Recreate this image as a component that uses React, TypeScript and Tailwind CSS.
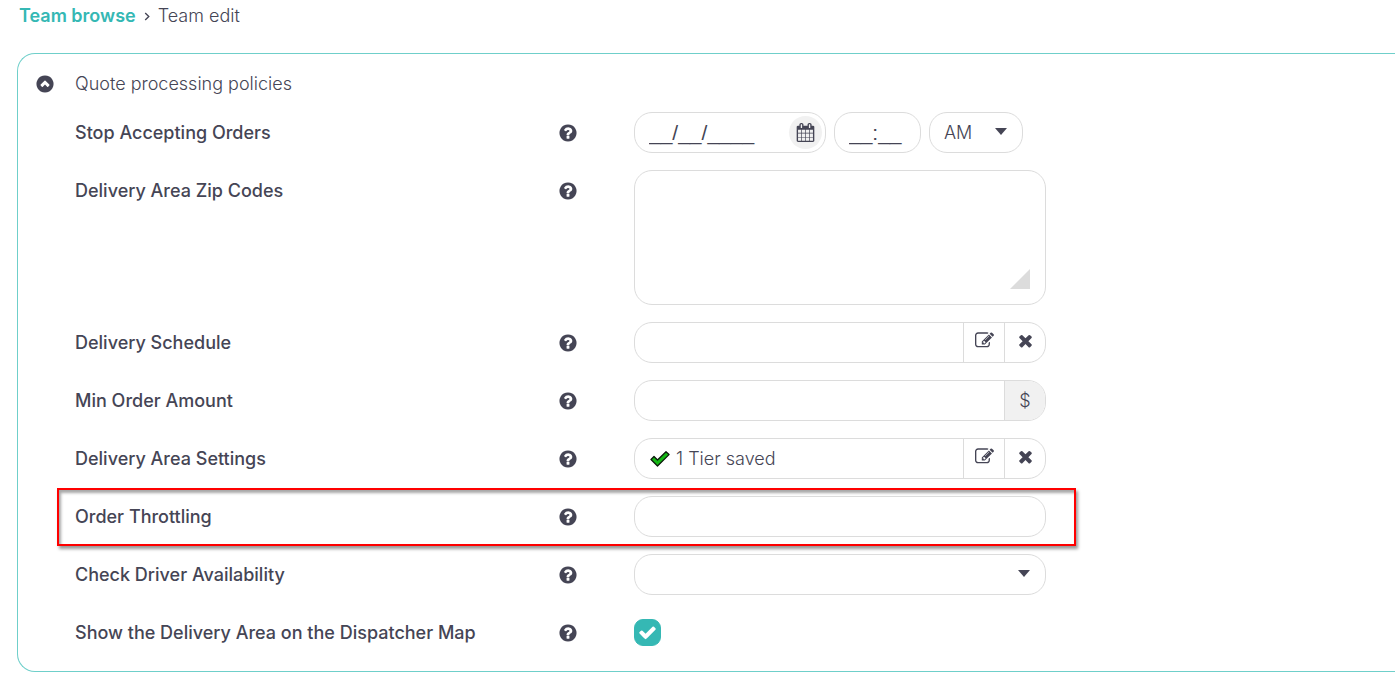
import { useState, type ReactNode } from "react";

const DISC =
  "M1664 896q0 209-103 385.500t-279.500 279.500-385.500 103-385.500-103-279.500-279.500-103-385.500 103-385.500 279.500-279.500 385.500-103 385.500 103 279.500 279.500 103 385.500z";

const PATHS = {
  question:
    "M1024 1376v-192q0-14-9-23t-23-9h-192q-14 0-23 9t-9 23v192q0 14 9 23t23 9h192q14 0 23-9t9-23zm256-672q0-88-55.500-163t-138.500-116-170-41q-243 0-371 213-15 24 8 42l132 100q7 6 19 6 16 0 25-12 53-68 86-92 34-24 86-24 48 0 85.500 26t37.500 59q0 38-20 61t-68 45q-63 28-115.500 86.500t-52.500 125.500v36q0 14 9 23t23 9h192q14 0 23-9t9-23q0-19 21.500-49.500t54.500-49.500q32-18 49-28.500t46-35 44.500-48 28-60.500 12.500-81z " +
    DISC,
  up:
    "M1179 1139l102-102q19-19 19-45t-19-45l-340-340q-19-19-45-19t-45 19l-340 340q-19 19-19 45t19 45l102 102q19 19 45 19t45-19l193-193 193 193q19 19 45 19t45-19z " +
    DISC,
  calendar:
    "M192 1664h288v-288h-288v288zm352 0h320v-288h-320v288zm-352-352h288v-320h-288v320zm352 0h320v-320h-320v320zm-352-384h288v-288h-288v288zm736 736h320v-288h-320v288zm-384-736h320v-288h-320v288zm768 736h288v-288h-288v288zm-384-352h320v-320h-320v320zm-352-864v-288q0-13-9.500-22.500t-22.500-9.500h-64q-13 0-22.500 9.500t-9.500 22.500v288q0 13 9.500 22.500t22.500 9.500h64q13 0 22.500-9.500t9.500-22.500zm736 864h288v-320h-288v320zm-384-384h320v-288h-320v288zm384 0h288v-288h-288v288zm32-480v-288q0-13-9.500-22.500t-22.500-9.500h-64q-13 0-22.500 9.500t-9.500 22.500v288q0 13 9.500 22.500t22.500 9.500h64q13 0 22.500-9.500t9.500-22.500zm384-64v1280q0 52-38 90t-90 38h-1408q-52 0-90-38t-38-90v-1280q0-52 38-90t90-38h128v-96q0-66 47-113t113-47h64q66 0 113 47t47 113v96h384v-96q0-66 47-113t113-47h64q66 0 113 47t47 113v96h128q52 0 90 38t38 90z",
  edit:
    "M888 1184l116-116-152-152-116 116v56h96v96h56zm440-720q-16-16-33 1l-350 350q-17 17-1 33t33-1l350-350q17-17 1-33zm80 594v190q0 119-84.500 203.500t-203.500 84.500h-832q-119 0-203.500-84.500t-84.500-203.500v-832q0-119 84.500-203.500t203.500-84.500h832q63 0 117 25 15 7 18 23 3 17-9 29l-49 49q-14 14-32 8-23-6-45-6h-832q-66 0-113 47t-47 113v832q0 66 47 113t113 47h832q66 0 113-47t47-113v-126q0-13 9-22l64-64q15-15 35-7t20 29zm-96-738l288 288-672 672h-288v-288zm444 132l-92 92-288-288 92-92q28-28 68-28t68 28l152 152q28 28 28 68t-28 68z",
  times:
    "M1490 1322q0 40-28 68l-136 136q-28 28-68 28t-68-28l-294-294-294 294q-28 28-68 28t-68-28l-136-136q-28-28-28-68t28-68l294-294-294-294q-28-28-28-68t28-68l136-136q28-28 68-28t68 28l294 294 294-294q28-28 68-28t68 28l136 136q28 28 28 68t-28 68l-294 294 294 294q28 28 28 68z",
  check:
    "M1671 566q0 40-28 68l-724 724-136 136q-28 28-68 28t-68-28l-136-136-362-362q-28-28-28-68t28-68l136-136q28-28 68-28t68 28l294 295 656-657q28-28 68-28t68 28l136 136q28 28 28 68z",
};

function Icon({ name, className }: { name: keyof typeof PATHS; className: string }) {
  return (
    <svg
      viewBox="0 0 1792 1792"
      fill="currentColor"
      fillRule="evenodd"
      className={className}
      aria-hidden="true"
    >
      <path d={PATHS[name]} />
    </svg>
  );
}

function Caret() {
  return (
    <svg
      viewBox="0 0 12 7"
      fill="currentColor"
      className="pointer-events-none absolute top-4 right-4 h-[7px] w-3"
      aria-hidden="true"
    >
      <path d="M0 0h12L6 7z" />
    </svg>
  );
}

const box = "h-[41px] rounded-[18px] border border-[#dcdcdc] bg-white font-light outline-none";
const mask = "font-['Liberation_Sans',sans-serif] text-[21px]";

function Row({ id, label, children }: { id: string; label: string; children: ReactNode }) {
  return (
    <div className="flex items-start">
      <div className="flex h-[41px] w-[483px] shrink-0 items-center">
        <label htmlFor={id} className="font-[450]">
          {label}
        </label>
      </div>
      <button
        type="button"
        aria-label={`Help: ${label}`}
        className="flex h-[41px] w-[76px] shrink-0 items-center"
      >
        <Icon name="question" className="size-5" />
      </button>
      {children}
    </div>
  );
}

function Actions({ label }: { label: string }) {
  return (
    <>
      <button
        type="button"
        aria-label={`Edit ${label}`}
        className="flex w-[41px] items-center justify-center border-l border-[#dcdcdc] pb-1"
      >
        <Icon name="edit" className="size-[19px]" />
      </button>
      <button
        type="button"
        aria-label={`Clear ${label}`}
        className="flex w-[41px] items-center justify-center border-l border-[#dcdcdc] pb-1"
      >
        <Icon name="times" className="size-[19px]" />
      </button>
    </>
  );
}

function SavedMark() {
  return (
    <svg viewBox="0 0 20 16" className="h-4 w-5 shrink-0" aria-hidden="true">
      <path
        d="M1 8.500 4 5.500 7.500 9 16 .8 19 3.600 7.500 15z"
        fill="#14b814"
        stroke="#0b1a0b"
        strokeWidth="1.300"
        strokeLinejoin="round"
      />
    </svg>
  );
}

export default function App() {
  const [shown, setShown] = useState(true);

  return (
    <main className="min-h-screen bg-white pb-3 font-['Inter','Noto_Sans',sans-serif] text-[18px] leading-6 text-[#454555]">
      <nav aria-label="Breadcrumb" className="flex h-[53px] items-start pt-1 pl-[19px]">
        <a href="#teams" className="font-semibold text-[#35b8b4]">
          Team browse
        </a>
        <svg
          viewBox="0 0 6 10"
          className="mx-2 mt-2 h-[9px] w-[6px]"
          fill="none"
          stroke="currentColor"
          strokeWidth="1.500"
          aria-hidden="true"
        >
          <path d="M1 1l4 4-4 4" />
        </svg>
        <span className="font-light">Team edit</span>
      </nav>

      <section className="ml-[17px] rounded-l-[18px] border border-r-0 border-[#6fcfca] py-[18px] pl-[17px]">
        <h2 className="mb-4">
          <button type="button" aria-expanded="true" className="flex items-center font-light">
            <Icon name="up" className="mr-5 size-5" />
            Quote processing policies
          </button>
        </h2>

        <form className="flex flex-col gap-[17px] pl-10">
          <Row id="stop-date" label="Stop Accepting Orders">
            <div className="flex gap-2">
              <div className={`${box} flex w-[192px] items-center pr-[3px] pl-[14px]`}>
                <input
                  id="stop-date"
                  type="text"
                  defaultValue="__/__/____"
                  className={`${mask} w-full min-w-0 bg-transparent outline-none`}
                />
                <button
                  type="button"
                  aria-label="Open calendar"
                  className="flex size-[33px] shrink-0 items-center justify-center rounded-full bg-[#f1f1f1]"
                >
                  <Icon name="calendar" className="size-[19px]" />
                </button>
              </div>
              <input
                type="text"
                aria-label="Stop time"
                defaultValue="__:__"
                className={`${box} ${mask} w-[87px] px-[14px]`}
              />
              <div className="relative">
                <select
                  aria-label="AM or PM"
                  className={`${box} w-[94px] appearance-none px-[14px]`}
                >
                  <option>AM</option>
                  <option>PM</option>
                </select>
                <Caret />
              </div>
            </div>
          </Row>

          <Row id="zips" label="Delivery Area Zip Codes">
            <div className="relative w-[412px]">
              <textarea
                id="zips"
                className="block h-[135px] w-full resize-none rounded-[18px] border border-[#dcdcdc] bg-white px-4 py-2 font-light outline-none"
              />
              <svg
                viewBox="0 0 20 20"
                className="pointer-events-none absolute right-4 bottom-4 size-5"
                fill="#dcdcdc"
                aria-hidden="true"
              >
                <path d="M20 0v20H0z" />
              </svg>
            </div>
          </Row>

          <Row id="schedule" label="Delivery Schedule">
            <div className={`${box} flex w-[412px] overflow-hidden`}>
              <input id="schedule" type="text" className="min-w-0 flex-1 px-4 outline-none" />
              <Actions label="delivery schedule" />
            </div>
          </Row>

          <Row id="min-order" label="Min Order Amount">
            <div className={`${box} flex w-[412px] overflow-hidden`}>
              <input id="min-order" type="text" className="min-w-0 flex-1 px-4 outline-none" />
              <span className="flex w-[41px] items-center justify-center border-l border-[#dcdcdc] bg-[#f1f1f1]">
                $
              </span>
            </div>
          </Row>

          <Row id="area" label="Delivery Area Settings">
            <div className={`${box} flex w-[412px] overflow-hidden`}>
              <div className="flex min-w-0 flex-1 items-center gap-[6px] pl-[15px]">
                <SavedMark />
                <input
                  id="area"
                  type="text"
                  readOnly
                  defaultValue="1 Tier saved"
                  className="min-w-0 flex-1 outline-none"
                />
              </div>
              <Actions label="delivery area settings" />
            </div>
          </Row>

          <div className="relative">
            <Row id="throttling" label="Order Throttling">
              <input id="throttling" type="text" className={`${box} w-[412px] px-4`} />
            </Row>
            <div className="pointer-events-none absolute -top-2 -left-[18px] h-[58px] w-[1019px] border-2 border-[#ff0000] shadow-[2px_3px_3px_rgba(0,0,0,0.4),inset_2px_3px_3px_rgba(0,0,0,0.35)]" />
          </div>

          <Row id="driver" label="Check Driver Availability">
            <div className="relative w-[412px]">
              <select id="driver" className={`${box} w-full appearance-none px-4`}>
                <option></option>
                <option>Yes</option>
                <option>No</option>
              </select>
              <Caret />
            </div>
          </Row>

          <Row id="show-area" label="Show the Delivery Area on the Dispatcher Map">
            <div className="flex h-[41px] items-center">
              <div className="relative size-[27px]">
                <input
                  id="show-area"
                  type="checkbox"
                  checked={shown}
                  onChange={(e) => setShown(e.target.checked)}
                  className="block size-full appearance-none rounded-[9px] border border-[#35b8b4] checked:bg-[#35b8b4]"
                />
                {shown && (
                  <Icon
                    name="check"
                    className="pointer-events-none absolute top-1 left-1 size-[19px] text-white"
                  />
                )}
              </div>
            </div>
          </Row>
        </form>
      </section>
    </main>
  );
}
